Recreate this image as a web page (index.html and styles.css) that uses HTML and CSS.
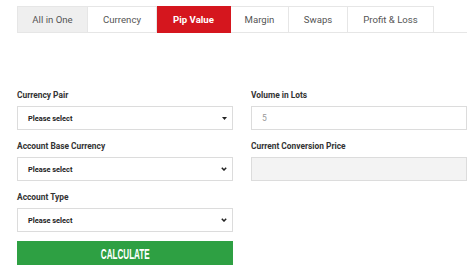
FILE: index.html
```html
<!DOCTYPE html>
<html>
<head>
<meta charset="utf-8">
<link rel="stylesheet" href="styles.css">
</head>
<body>
<div class="calc">
  <div class="tabs">
    <div class="tab tab-light">All in One</div>
    <div class="tab">Currency</div>
    <div class="tab tab-active">Pip Value</div>
    <div class="tab">Margin</div>
    <div class="tab">Swaps</div>
    <div class="tab">Profit &amp; Loss</div>
  </div>
  <div class="form">
    <div class="col">
      <div class="field">
        <div class="label">Currency Pair</div>
        <div class="box select">
          <span>Please select</span>
          <svg class="caret" width="5" height="3" viewBox="0 0 5 3"><path d="M0 0H5L2.5 3Z" fill="#222"/></svg>
        </div>
      </div>
      <div class="field">
        <div class="label">Account Base Currency</div>
        <div class="box select">
          <span>Please select</span>
          <svg class="chev" width="6" height="4" viewBox="0 0 6 4"><path d="M0.8 0.8L3 3L5.2 0.8" fill="none" stroke="#222" stroke-width="1.5"/></svg>
        </div>
      </div>
      <div class="field">
        <div class="label">Account Type</div>
        <div class="box select">
          <span>Please select</span>
          <svg class="chev" width="6" height="4" viewBox="0 0 6 4"><path d="M0.8 0.8L3 3L5.2 0.8" fill="none" stroke="#222" stroke-width="1.5"/></svg>
        </div>
      </div>
      <div class="btn"><span class="btn-text">CALCULATE</span></div>
    </div>
    <div class="col">
      <div class="field">
        <div class="label">Volume in Lots</div>
        <div class="box input"><span>5</span></div>
      </div>
      <div class="field">
        <div class="label">Current Conversion Price</div>
        <div class="box input disabled"></div>
      </div>
    </div>
  </div>
</div>
</body>
</html>
```
FILE: styles.css
```css
html, body {
  margin: 0;
  padding: 0;
  background: #fff;
}
body {
  font-family: Roboto, "Liberation Sans", sans-serif;
  color: #333;
}
.calc {
  width: 450px;
  margin-left: 17px;
  padding-top: 6px;
}
.tabs {
  display: flex;
  height: 26px;
  border-bottom: 1px solid #e6e6e6;
}
.tab {
  box-sizing: border-box;
  height: 27px;
  display: flex;
  align-items: center;
  justify-content: center;
  font-size: 9.6px;
  color: #555;
  border: 1px solid #e6e6e6;
  border-left: none;
  background: #fff;
}
.tab:nth-child(1) { width: 71px; border-left: 1px solid #e6e6e6; }
.tab:nth-child(2) { width: 69px; }
.tab:nth-child(3) { width: 74px; }
.tab:nth-child(4) { width: 58px; }
.tab:nth-child(5) { width: 59px; }
.tab:nth-child(6) { width: 86px; }
.tab-light {
  background: #efefef;
}
.tab-active {
  background: #d5161e;
  border-color: #d5161e;
  color: #fff;
  font-weight: 700;
}
.form {
  display: flex;
  gap: 18px;
  margin-top: 56px;
}
.col {
  width: 216px;
  display: flex;
  flex-direction: column;
}
.field {
  display: flex;
  flex-direction: column;
}
.field + .field {
  margin-top: 10px;
}
.label {
  font-size: 8.4px;
  font-weight: 700;
  color: #333;
  height: 17px;
  line-height: 12px;
}
.box {
  box-sizing: border-box;
  height: 24px;
  border: 1px solid #dcdcdc;
  display: flex;
  align-items: center;
  justify-content: space-between;
  padding: 0 5px 0 10px;
  background: #fff;
}
.select span {
  font-size: 7.4px;
  font-weight: 700;
  color: #222;
}
.input span {
  font-size: 8.5px;
  color: #999;
}
.disabled {
  background: #f3f3f3;
}
.btn {
  margin-top: 9px;
  height: 24px;
  background: #2ea043;
  color: #fff;
  display: flex;
  align-items: center;
  justify-content: center;
  font-family: "Liberation Sans", sans-serif;
  font-weight: 700;
  font-size: 15px;
}
.btn-text {
  display: inline-block;
  transform: scaleX(0.54);
}
```
